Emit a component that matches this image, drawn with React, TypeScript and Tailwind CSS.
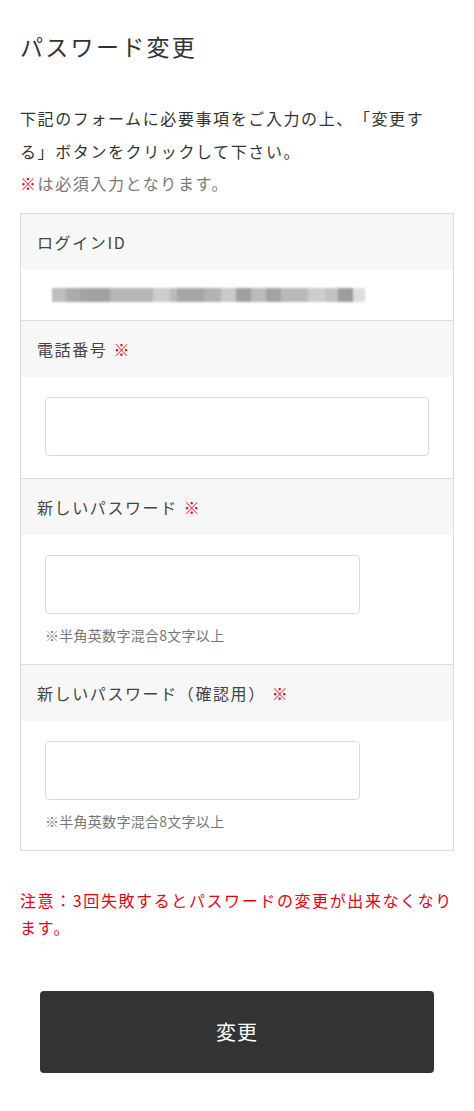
const font = { fontFamily: '"Noto Sans CJK JP", "Noto Sans", sans-serif' };

const blurBlocks = [
  "w-[14px] bg-[#bdbdbd]",
  "w-[14px] bg-[#ababab]",
  "w-[30px] bg-[#a2a2a2]",
  "w-[43px] bg-[#b6b6b6]",
  "w-[17px] bg-[#cdcdcd]",
  "w-[7px] bg-[#bcbcbc]",
  "w-[27px] bg-[#a6a6a6]",
  "w-[17px] bg-[#b2b2b2]",
  "w-[15px] bg-[#c9c9c9]",
  "w-[15px] bg-[#a0a0a0]",
  "w-[15px] bg-[#bbbbbb]",
  "w-[15px] bg-[#a2a2a2]",
  "w-[27px] bg-[#b9b9b9]",
  "w-[17px] bg-[#cdcdcd]",
  "w-[13px] bg-[#c2c2c2]",
  "w-[15px] bg-[#9c9c9c]",
  "w-[12px] bg-[#dedede]",
];

function Required() {
  return <span className="ml-[6px] text-[#e60012]">※</span>;
}

function FieldRow({
  label,
  required,
  inputClass,
  note,
  last,
}: {
  label: string;
  required?: boolean;
  inputClass: string;
  note?: string;
  last?: boolean;
}) {
  return (
    <div className={last ? "" : "border-b border-[#dcdcdc]"}>
      <div className="flex h-[56px] items-center bg-[#f7f7f7] px-4 text-[16px] tracking-[0.1em] text-[#444]">
        {label}
        {required && <Required />}
      </div>
      <div className={`px-6 pt-5 ${note ? "pb-[19px]" : "pb-[22px]"}`}>
        <input
          type="text"
          className={`block rounded-[4px] border border-[#dadada] bg-white outline-none ${inputClass}`}
        />
        {note && (
          <p className="mt-[11px] text-[14px] leading-[20px] tracking-[0.02em] text-[#777]">{note}</p>
        )}
      </div>
    </div>
  );
}

export default function App() {
  return (
    <div
      className="min-h-[1111px] bg-white px-5 pb-10 text-[#333] [text-spacing-trim:space-all]"
      style={font}
    >
      <h1 className="pt-[29px] text-[23px] font-normal leading-[34px] tracking-[0.1em]">パスワード変更</h1>

      <p className="mt-[39px] text-[16px] leading-[33px] tracking-[0.1em]">
        下記のフォームに必要事項をご入力の上、「変更す
        <br />
        る」ボタンをクリックして下さい。
      </p>
      <p className="text-[16px] leading-[30px] tracking-[0.1em] text-[#777]">
        <span className="text-[#e60012]">※</span>は必須入力となります。
      </p>

      <div className="mt-[15px] border border-[#dcdcdc]">
        <div className="border-b border-[#dcdcdc]">
          <div className="flex h-[56px] items-center bg-[#f7f7f7] px-4 text-[16px] tracking-[0.1em] text-[#444]">
            ログインID
          </div>
          <div className="flex h-[50px] items-center pl-[31px]">
            <div className="flex h-[14px] blur-[1.2px]">
              {blurBlocks.map((c, i) => (
                <div key={i} className={`h-full ${c}`} />
              ))}
            </div>
          </div>
        </div>

        <FieldRow label="電話番号" required inputClass="h-[59px] w-full" />
        <FieldRow
          label="新しいパスワード"
          required
          inputClass="h-[59px] w-[315px]"
          note="※半角英数字混合8文字以上"
        />
        <FieldRow
          label="新しいパスワード（確認用）"
          required
          inputClass="h-[59px] w-[315px]"
          note="※半角英数字混合8文字以上"
          last
        />
      </div>

      <p className="mt-[36px] text-[16px] leading-[27px] tracking-[0.1em] text-[#e60012]">
        注意：3回失敗するとパスワードの変更が出来なくなります。
      </p>

      <div className="mt-[50px] px-5">
        <button
          type="button"
          className="flex h-[82px] w-full items-center justify-center rounded-[4px] bg-[#333] text-[20px] tracking-[0.05em] text-white"
        >
          変更
        </button>
      </div>
    </div>
  );
}
